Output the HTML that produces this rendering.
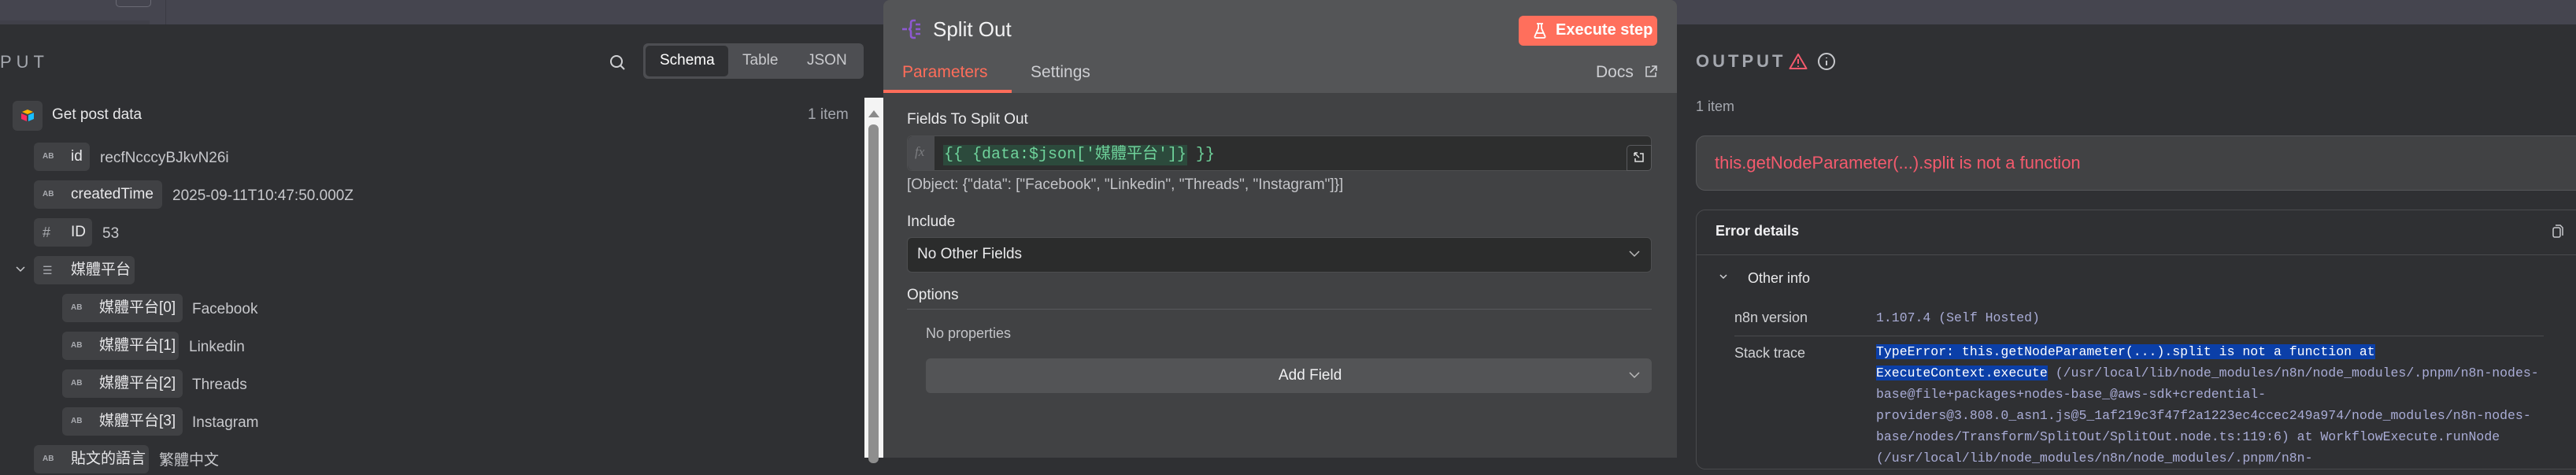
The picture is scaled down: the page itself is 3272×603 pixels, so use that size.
<!DOCTYPE html>
<html><head><meta charset="utf-8"><style>
*{box-sizing:border-box;margin:0;padding:0}
body{width:3272px;height:581px;overflow:hidden;background:#2f3033;font-family:"Liberation Sans","Noto Sans CJK TC",sans-serif;position:relative;color:#e4e4e6}
.a{position:absolute;white-space:nowrap}
.mono{font-family:"Liberation Mono","Noto Sans CJK TC",monospace}
.pill{position:absolute;height:36px;background:#404144;border-radius:6px}
.ab{position:absolute;font-size:10px;color:#a9abb0;font-weight:bold;line-height:36px;top:0}
.k{position:absolute;font-size:19px;color:#e8e8ea;top:0;line-height:36px}
.v{position:absolute;font-size:19px;color:#c7c8cc;line-height:36px}
</style></head><body>
<!-- top bar -->
<div class="a" style="left:0;top:0;width:3272px;height:31px;background:#45454f"></div>
<div class="a" style="left:147px;top:-6px;width:45px;height:15px;border:1px solid #6a6a74;border-radius:5px"></div>
<div class="a" style="left:210px;top:0;width:1px;height:31px;background:#3b3b44"></div>
<div class="a" style="left:0;top:26px;width:190px;height:5px;background:#404049"></div>

<!-- INPUT panel -->
<div class="a" style="left:0;top:66px;font-size:22px;letter-spacing:6px;color:#a4a7ae">PUT</div>
<svg class="a" style="left:772px;top:67px" width="24" height="24" viewBox="0 0 24 24" fill="none" stroke="#d0d1d4" stroke-width="2"><circle cx="11" cy="11" r="7"/><path d="M16 16l5 5"/></svg>
<div class="a" style="left:817px;top:55px;width:280px;height:45px;background:#4d4e52;border-radius:6px"></div>
<div class="a" style="left:820px;top:58px;width:105px;height:39px;background:#2f3033;border-radius:5px"></div>
<div class="a" style="left:838px;top:66px;font-size:19px;color:#fff">Schema</div>
<div class="a" style="left:943px;top:66px;font-size:19px;color:#c9cacd">Table</div>
<div class="a" style="left:1025px;top:66px;font-size:19px;color:#c9cacd">JSON</div>

<div class="a" style="left:16px;top:128px;width:38px;height:38px;background:#404144;border-radius:6px"></div>
<svg class="a" style="left:25px;top:137px" width="20" height="20" viewBox="0 0 20 20"><path d="M10 2l7 3-7 3-7-3z" fill="#fcb400"/><path d="M11 9l7-3v8l-7 3z" fill="#18bfff"/><path d="M2 7l7 3v7L2 14z" fill="#f82b60"/></svg>
<div class="a" style="left:66px;top:135px;font-size:19px;color:#e8e8ea">Get post data</div>
<div class="a" style="left:1026px;top:135px;font-size:19px;color:#a4a7ae">1 item</div>

<div class="pill" style="left:43px;top:181px;width:71px"><span class="ab" style="left:11px">AB</span><span class="k" style="left:47px">id</span></div>
<div class="v a" style="left:127px;top:183px">recfNcccyBJkvN26i</div>
<div class="pill" style="left:43px;top:229px;width:163px"><span class="ab" style="left:11px">AB</span><span class="k" style="left:47px">createdTime</span></div>
<div class="v a" style="left:219px;top:231px">2025-09-11T10:47:50.000Z</div>
<div class="pill" style="left:43px;top:277px;width:74px"><span class="ab" style="left:11px;font-size:18px;font-weight:normal">#</span><span class="k" style="left:47px">ID</span></div>
<div class="v a" style="left:130px;top:279px">53</div>
<svg class="a" style="left:19px;top:337px" width="14" height="10" viewBox="0 0 14 10" fill="none" stroke="#c7c8cc" stroke-width="1.5"><path d="M2 2l5 5 5-5"/></svg>
<div class="pill" style="left:43px;top:325px;width:128px"><span class="ab" style="left:11px;font-size:14px;font-weight:normal">&#9776;</span><span class="k" style="left:47px">媒體平台</span></div>
<div class="pill" style="left:79px;top:373px;width:153px"><span class="ab" style="left:11px">AB</span><span class="k" style="left:47px">媒體平台[0]</span></div>
<div class="v a" style="left:244px;top:375px">Facebook</div>
<div class="pill" style="left:79px;top:421px;width:148px"><span class="ab" style="left:11px">AB</span><span class="k" style="left:47px">媒體平台[1]</span></div>
<div class="v a" style="left:240px;top:423px">Linkedin</div>
<div class="pill" style="left:79px;top:469px;width:153px"><span class="ab" style="left:11px">AB</span><span class="k" style="left:47px">媒體平台[2]</span></div>
<div class="v a" style="left:244px;top:471px">Threads</div>
<div class="pill" style="left:79px;top:517px;width:153px"><span class="ab" style="left:11px">AB</span><span class="k" style="left:47px">媒體平台[3]</span></div>
<div class="v a" style="left:244px;top:519px">Instagram</div>
<div class="pill" style="left:43px;top:565px;width:146px"><span class="ab" style="left:11px">AB</span><span class="k" style="left:47px">貼文的語言</span></div>
<div class="v a" style="left:202px;top:567px">繁體中文</div>

<!-- scrollbar -->
<div class="a" style="left:1098px;top:124px;width:24px;height:457px;background:#f4f4f4"></div>
<div class="a" style="left:1103px;top:140px;width:0;height:0;border-left:7px solid transparent;border-right:7px solid transparent;border-bottom:9px solid #8a8a8a"></div>
<div class="a" style="left:1103px;top:158px;width:13px;height:430px;background:#8e8e8e;border-radius:6px"></div>

<!-- middle panel -->
<div class="a" style="left:1122px;top:0;width:1008px;height:581px;background:#414244;border-radius:8px 8px 0 0"></div>
<div class="a" style="left:1122px;top:0;width:1008px;height:118px;background:#545557;border-radius:8px 8px 0 0"></div>
<svg class="a" style="left:1145px;top:24px" width="28" height="26" viewBox="0 0 28 26" fill="none" stroke="#8e59d2" stroke-width="2.6"><path d="M1 13h6"/><path d="M18 2h-3q-3 0-3 3v4q0 4-3 4q3 0 3 4v4q0 3 3 3h3"/><path d="M18 7h6M18 13h6M18 19h6"/></svg>
<div class="a" style="left:1185px;top:22px;font-size:26px;color:#f2f2f3">Split Out</div>
<div class="a" style="left:1929px;top:20px;width:176px;height:38px;background:#ff6f5c;border-radius:6px"></div>
<svg class="a" style="left:1948px;top:29px" width="16" height="20" viewBox="0 0 16 20" fill="none" stroke="#fff" stroke-width="1.8"><path d="M4 1h8M6 1v6L1.5 17q-.5 2 1.5 2h10q2 0 1.5-2L10 7V1"/><path d="M3.5 13h9"/></svg>
<div class="a" style="left:1976px;top:27px;font-size:20px;font-weight:bold;color:#fff">Execute step</div>
<div class="a" style="left:1146px;top:80px;font-size:21px;color:#ff6d5a">Parameters</div>
<div class="a" style="left:1309px;top:80px;font-size:21px;color:#cdced2">Settings</div>
<div class="a" style="left:1122px;top:114px;width:163px;height:4px;background:#ff6d5a"></div>
<div class="a" style="left:2027px;top:80px;font-size:21px;color:#cdced2">Docs</div>
<svg class="a" style="left:2089px;top:83px" width="16" height="16" viewBox="0 0 16 16" fill="none" stroke="#cdced2" stroke-width="1.6"><path d="M7 2H2v12h12V9"/><path d="M9 1h6v6M15 1L7 9"/></svg>

<div class="a" style="left:1152px;top:141px;font-size:19px;color:#eaeaec">Fields To Split Out</div>
<div class="a" style="left:1152px;top:172px;width:946px;height:45px;background:#2d2e2e;border:1px solid #4d4e50;border-radius:6px"></div>
<div class="a" style="left:1153px;top:173px;width:34px;height:43px;background:#4a4b4e;border-radius:6px 0 0 6px"></div>
<div class="a" style="left:1162px;top:183px;font-size:17px;font-style:italic;color:#7c7d80;font-family:'Liberation Serif',serif">fx</div>
<div class="a mono" style="left:1198px;top:184px;height:26px;width:310px;background:#2c4a3c"></div>
<div class="a mono" style="left:1199px;top:184px;font-size:20px;color:#6fd39b;line-height:26px">{{ {data:$json['媒體平台']} }}</div>
<div class="a" style="left:2066px;top:184px;width:32px;height:33px;border:1px solid #5a5b5e;border-radius:5px 0 5px 0;background:#2d2e2e"></div>
<svg class="a" style="left:2074px;top:192px" width="16" height="16" viewBox="0 0 16 16" fill="none" stroke="#e0e0e0" stroke-width="1.5"><path d="M2 2l6 6M2 2h4M2 2v4"/><path d="M9 3h4v10H3V9"/></svg>
<div class="a" style="left:1152px;top:224px;font-size:19px;color:#c3c4c8">[Object: {"data": ["Facebook", "Linkedin", "Threads", "Instagram"]}]</div>
<div class="a" style="left:1152px;top:271px;font-size:19px;color:#eaeaec">Include</div>
<div class="a" style="left:1152px;top:301px;width:946px;height:45px;background:#2b2c2c;border:1px solid #4d4e50;border-radius:6px"></div>
<div class="a" style="left:1165px;top:312px;font-size:19px;color:#eaeaec">No Other Fields</div>
<svg class="a" style="left:2068px;top:316px" width="16" height="12" viewBox="0 0 16 12" fill="none" stroke="#bbb" stroke-width="1.5"><path d="M2 3l6 6 6-6"/></svg>
<div class="a" style="left:1152px;top:364px;font-size:19px;color:#eaeaec">Options</div>
<div class="a" style="left:1152px;top:392px;width:946px;height:1px;background:#58595c"></div>
<div class="a" style="left:1176px;top:413px;font-size:18px;color:#c3c4c8">No properties</div>
<div class="a" style="left:1176px;top:455px;width:922px;height:44px;background:#535456;border-radius:6px"></div>
<div class="a" style="left:1624px;top:466px;font-size:19px;color:#f0f0f2">Add Field</div>
<svg class="a" style="left:2068px;top:470px" width="16" height="12" viewBox="0 0 16 12" fill="none" stroke="#bbb" stroke-width="1.5"><path d="M2 3l6 6 6-6"/></svg>

<!-- OUTPUT panel -->
<div class="a" style="left:2154px;top:65px;font-size:22px;letter-spacing:4px;font-weight:bold;color:#a4a7ae">OUTPUT</div>
<svg class="a" style="left:2272px;top:67px" width="24" height="22" viewBox="0 0 24 22" fill="none" stroke="#f45a6d" stroke-width="2"><path d="M12 2L1.5 20h21z" stroke-linejoin="round"/><path d="M12 8v6M12 16.5v1.5"/></svg>
<svg class="a" style="left:2308px;top:66px" width="24" height="24" viewBox="0 0 24 24" fill="none" stroke="#c7c8cc" stroke-width="2"><circle cx="12" cy="12" r="10"/><path d="M12 11v6M12 7v1"/></svg>
<div class="a" style="left:2154px;top:125px;font-size:18px;color:#a4a7ae">1 item</div>
<div class="a" style="left:2154px;top:172px;width:1140px;height:70px;background:#414244;border:1px solid #555659;border-radius:12px"></div>
<div class="a" style="left:2178px;top:194px;font-size:22px;color:#f45a6d">this.getNodeParameter(...).split is not a function</div>
<div class="a" style="left:2154px;top:266px;width:1140px;height:330px;border:1px solid #4a4b4e;border-radius:12px"></div>
<div class="a" style="left:2154px;top:323px;width:1118px;height:1px;background:#4a4b4e"></div>
<div class="a" style="left:2179px;top:283px;font-size:18px;font-weight:bold;color:#f0f0f2">Error details</div>
<svg class="a" style="left:3242px;top:285px" width="14" height="18" viewBox="0 0 14 18" fill="none" stroke="#c7c8cc" stroke-width="1.5"><rect x="1" y="4" width="9" height="12" rx="2"/><path d="M4 1h6l3 3v10"/></svg>
<svg class="a" style="left:2183px;top:347px" width="12" height="9" viewBox="0 0 12 9" fill="none" stroke="#d0d0d4" stroke-width="1.5"><path d="M2 2l4 4 4-4"/></svg>
<div class="a" style="left:2220px;top:343px;font-size:18px;color:#eaeaec">Other info</div>
<div class="a" style="left:2203px;top:393px;font-size:18px;color:#d0d1d4">n8n version</div>
<div class="a mono" style="left:2383px;top:394px;font-size:16.5px;color:#a9acd6">1.107.4 (Self Hosted)</div>
<div class="a" style="left:2203px;top:426px;width:1028px;height:1px;background:#4a4b4e"></div>
<div class="a" style="left:2203px;top:438px;font-size:18px;color:#d0d1d4">Stack trace</div>
<div class="a mono" style="left:2383px;top:433px;width:850px;font-size:16.5px;line-height:27px;color:#a9acd6;white-space:normal;word-break:break-all">
<span style="background:#0b3fa8;color:#fff">TypeError: this.getNodeParameter(...).split is not a function at<br>ExecuteContext.execute</span> (/usr/local/lib/node_modules/n8n/node_modules/.pnpm/n8n-nodes-<br>base@file+packages+nodes-base_@aws-sdk+credential-<br>providers@3.808.0_asn1.js@5_1af219c3f47f2a1223ec4ccec249a974/node_modules/n8n-nodes-<br>base/nodes/Transform/SplitOut/SplitOut.node.ts:119:6) at WorkflowExecute.runNode<br>(/usr/local/lib/node_modules/n8n/node_modules/.pnpm/n8n-</div>
</body></html>
